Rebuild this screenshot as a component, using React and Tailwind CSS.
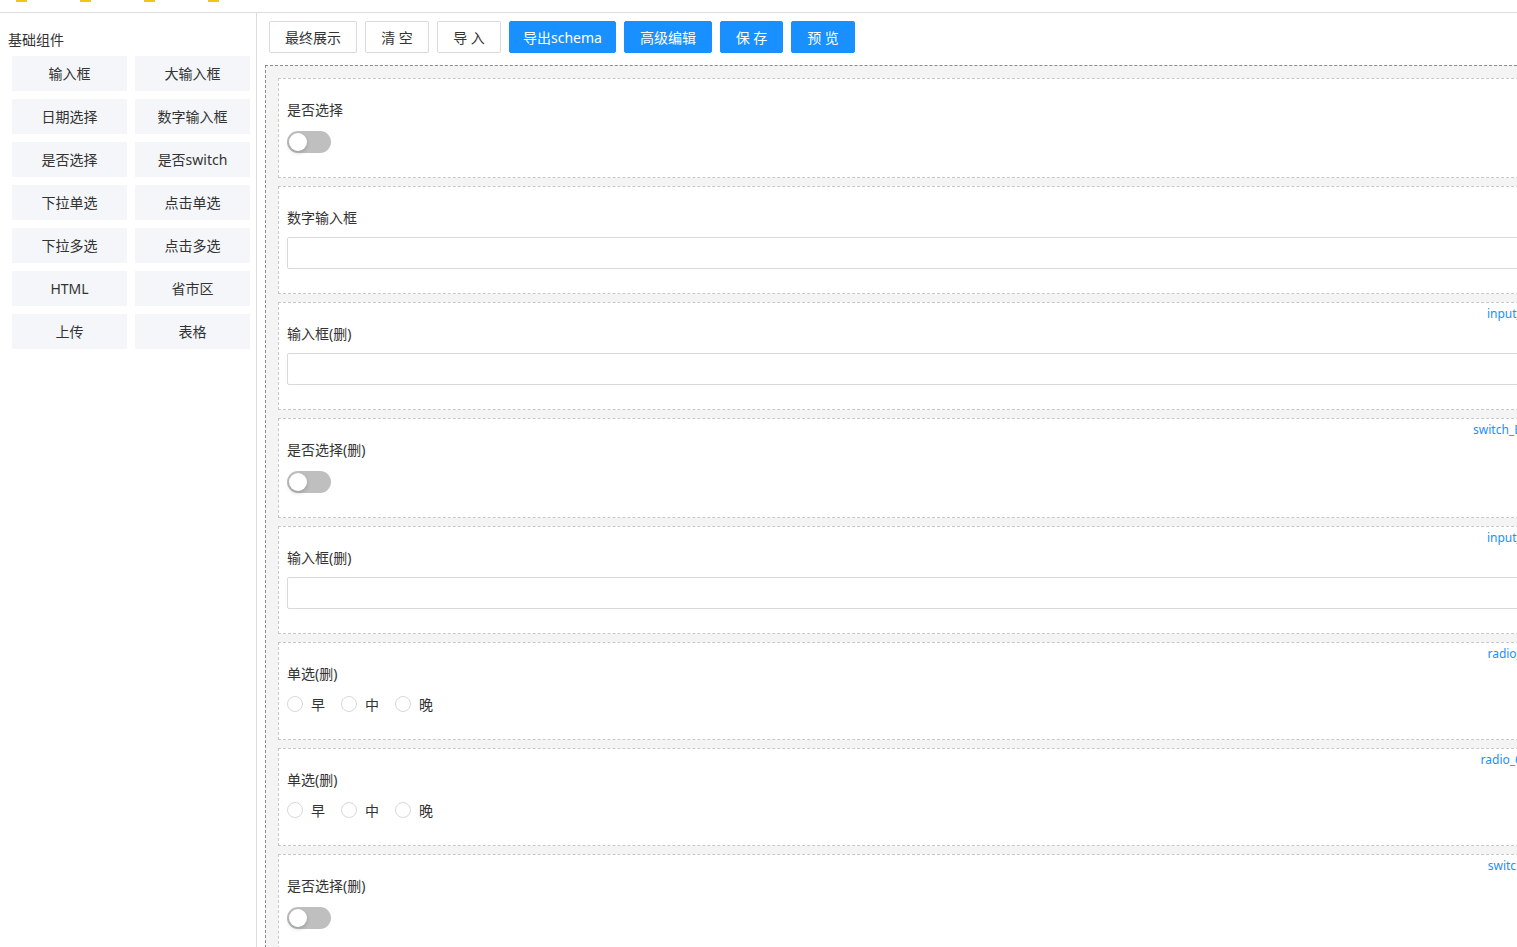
import React from "react";

const font = { fontFamily: '"Noto Sans", "Noto Sans CJK SC", sans-serif' };

const widgets = [
  ["输入框", "大输入框"],
  ["日期选择", "数字输入框"],
  ["是否选择", "是否switch"],
  ["下拉单选", "点击单选"],
  ["下拉多选", "点击多选"],
  ["HTML", "省市区"],
  ["上传", "表格"],
];

const fields = [
  { label: "是否选择", type: "switch" },
  { label: "数字输入框", type: "input" },
  { label: "输入框(删)", type: "input", tag: "input_1624083" },
  { label: "是否选择(删)", type: "switch", tag: "switch_B4720916" },
  { label: "输入框(删)", type: "input", tag: "input_5391827" },
  { label: "单选(删)", type: "radio", tag: "radio_8102736" },
  { label: "单选(删)", type: "radio", tag: "radio_64019283" },
  { label: "是否选择(删)", type: "switch", tag: "switch_731905" },
];

const Switch = () => (
  <div className="relative mt-[10px] h-[22px] w-[44px] rounded-full bg-[#bfbfbf]">
    <span className="absolute left-[2px] top-[2px] h-[18px] w-[18px] rounded-full bg-white shadow-[0_2px_4px_rgba(0,35,11,0.2)]" />
  </div>
);

const RadioGroup = () => (
  <div className="mt-2 flex h-[22px] items-center">
    {["早", "中", "晚"].map((opt) => (
      <label key={opt} className="mr-2 flex items-center text-[14px] text-[#333]">
        <span className="h-4 w-4 rounded-full border border-[#d9d9d9] bg-white" />
        <span className="px-2">{opt}</span>
      </label>
    ))}
  </div>
);

const FieldItem = ({ field }) => (
  <div className="relative mb-2 border border-dashed border-[#c8c8c8] bg-white px-2 pb-6 pt-5">
    {field.tag && (
      <span className="absolute right-2 top-[2px] text-[12px] leading-[18px] text-[#1890ff]">
        {field.tag}
      </span>
    )}
    <div className="text-[14px] leading-[22px] text-[#333]">{field.label}</div>
    {field.type === "switch" && <Switch />}
    {field.type === "input" && (
      <div className="mt-2 h-8 rounded-[2px] border border-[#d9d9d9] bg-white" />
    )}
    {field.type === "radio" && <RadioGroup />}
  </div>
);

const ToolButton = ({ children, primary, w }) => (
  <button
    className={
      primary
        ? `h-8 rounded-[2px] border border-[#1890ff] bg-[#1890ff] text-[14px] text-white ${w}`
        : `h-8 rounded-[2px] border border-[#d9d9d9] bg-white text-[14px] text-[#333] ${w}`
    }
  >
    {children}
  </button>
);

export default function App() {
  return (
    <div className="h-screen w-screen overflow-hidden bg-white" style={font}>
      <div className="w-[1600px]">
        {/* top strip */}
        <div className="relative h-[13px] border-b border-[#dddddd]">
          <div className="flex gap-[53px] pl-4">
            {[0, 1, 2, 3].map((i) => (
              <span key={i} className="h-[2px] w-[11px] bg-[#f0c419]" />
            ))}
          </div>
        </div>

        <div className="flex">
          {/* sidebar */}
          <aside className="min-h-[934px] w-[257px] shrink-0 border-r border-[#dddddd] pt-4">
            <div className="mb-[5px] pl-2 text-[14px] leading-[22px] text-[#333]">基础组件</div>
            <div className="grid grid-cols-[115px_115px] gap-2 pl-3">
              {widgets.flat().map((name) => (
                <div
                  key={name}
                  className="flex h-[35px] items-center justify-center bg-[#f4f6f9] text-[14px] text-[#333]"
                >
                  {name}
                </div>
              ))}
            </div>
          </aside>

          {/* main */}
          <main className="flex-1 px-2 pt-2">
            <div className="flex gap-2 pl-1">
              <ToolButton w="w-[88px]">最终展示</ToolButton>
              <ToolButton w="w-16">清 空</ToolButton>
              <ToolButton w="w-16">导 入</ToolButton>
              <ToolButton primary w="w-[107px]">导出schema</ToolButton>
              <ToolButton primary w="w-[88px]">高级编辑</ToolButton>
              <ToolButton primary w="w-[63px]">保 存</ToolButton>
              <ToolButton primary w="w-16">预 览</ToolButton>
            </div>
            <div className="mt-3 border border-dashed border-[#8c8c8c] bg-[#f4f4f4] px-3 pt-3">
              {fields.map((f, i) => (
                <FieldItem key={i} field={f} />
              ))}
            </div>
          </main>
        </div>
      </div>
    </div>
  );
}
